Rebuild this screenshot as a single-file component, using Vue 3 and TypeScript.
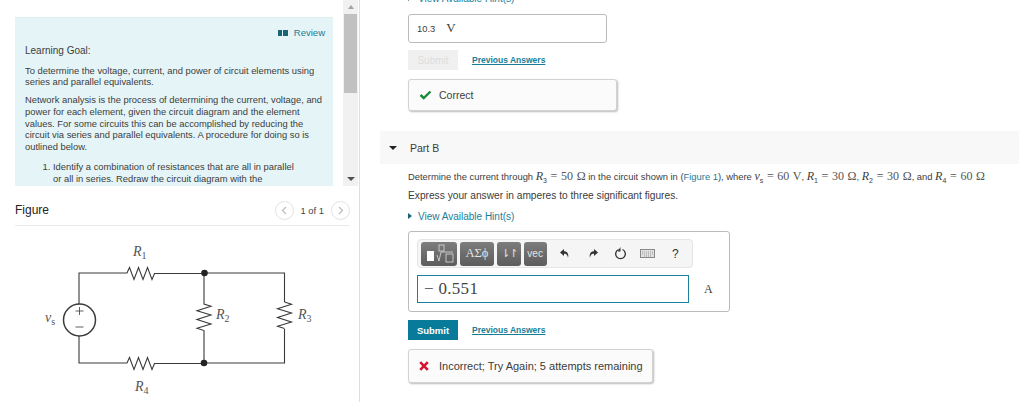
<script setup lang="ts">
const steps = ['Identify a combination of resistances that are all in parallel or all in series. Redraw the circuit diagram with the']
const tools = [
  { label: 'AΣϕ', cls: 'greek' },
  { label: '⇂↾', cls: 'arrows' },
  { label: 'vec', cls: 'vec' },
]
</script>

<template>
  <div class="page">
    <aside class="left">
      <div class="top-pane">
        <section class="goal">
          <div class="review"><span class="book"><i></i><i></i></span>Review</div>
          <p class="goal-title">Learning Goal:</p>
          <p class="intro">To determine the voltage, current, and power of circuit elements using series and parallel equivalents.</p>
          <p class="network">Network analysis is the process of determining the current, voltage, and power for each element, given the circuit diagram and the element values. For some circuits this can be accomplished by reducing the circuit via series and parallel equivalents. A procedure for doing so is outlined below.</p>
          <ol><li v-for="s in steps" :key="s">{{ s }}</li></ol>
        </section>
        <div class="scrollbar">
          <span class="arrow up"></span>
          <span class="thumb"></span>
          <span class="spacer"></span>
          <span class="arrow down"></span>
        </div>
      </div>
      <section class="figure">
        <header class="figure-head">
          <h2>Figure</h2>
          <div class="pager">
            <span class="round">
              <svg width="6" height="9" viewBox="0 0 6 9"><path d="M5 1L1.500 4.500 5 8" fill="none" stroke="#bbb" stroke-width="1.200"/></svg>
            </span>
            <span>1 of 1</span>
            <span class="round">
              <svg width="6" height="9" viewBox="0 0 6 9"><path d="M1 1l3.500 3.500L1 8" fill="none" stroke="#bbb" stroke-width="1.200"/></svg>
            </span>
          </div>
        </header>
        <svg class="circuit" width="345" height="160" viewBox="0 0 345 160">
          <g fill="none" stroke="#3a3a3a" stroke-width="1.100">
            <path d="M64 78V47H112l2.500-5.500 4.500 12 4.500-12 4.500 12 4.500-12 4.500 12 2.500-6H189"/>
            <path d="M189 47H269.500V76"/>
            <path d="M64 110V137H112l2.500-5.500 4.500 12 4.500-12 4.500 12 4.500-12 4.500 12 2.500-6H189"/>
            <path d="M189 137H269.500V103"/>
            <path d="M189 47V78l7 2.300-14 4.400 14 4.400-14 4.400 14 4.400-14 4.400 7 2.300V137"/>
            <path d="M269.500 76l7 2.300-14 4.400 14 4.400-14 4.400 14 4.400-14 4.400 7 2.300"/>
            <circle cx="64.500" cy="94" r="16" stroke-width="1.500"/>
            <path d="M60.500 85h8M64.500 81v8M60.500 101h8" stroke-width=".8"/>
          </g>
          <circle cx="189.500" cy="47" r="3.300" fill="#222"/>
          <circle cx="189" cy="137" r="3.300" fill="#222"/>
          <g class="m">
            <text x="118" y="30">R<tspan class="s" dy="3">1</tspan></text>
            <text x="201" y="93">R<tspan class="s" dy="3">2</tspan></text>
            <text x="283" y="93">R<tspan class="s" dy="3">3</tspan></text>
            <text x="120" y="165">R<tspan class="s" dy="3">4</tspan></text>
            <text x="30" y="96">v<tspan class="s" dy="3">s</tspan></text>
          </g>
        </svg>
      </section>
    </aside>

    <main class="right">
      <div class="hint cut"><span class="tri"></span>View Available Hint(s)</div>
      <div class="answer-box"><span>10.3</span><b>V</b></div>
      <div class="actions">
        <button class="submit off">Submit</button>
        <a>Previous Answers</a>
      </div>
      <div class="feedback correct">
        <svg width="13" height="10" viewBox="0 0 13 10"><path d="M1.500 5l3.200 3L11.500 1.500" fill="none" stroke="#1a8a3c" stroke-width="2.400"/></svg>
        Correct
      </div>

      <div class="part"><span class="down"></span>Part B</div>

      <p class="question">Determine the current through <i class="mi">R</i><sub>3</sub><span class="mn"> = 50 Ω</span> in the circuit shown in (<a class="fig">Figure 1</a>), where <i class="mi">v</i><sub>s</sub><span class="mn"> = 60 V</span>, <i class="mi">R</i><sub>1</sub><span class="mn"> = 30 Ω</span>, <i class="mi">R</i><sub>2</sub><span class="mn"> = 30 Ω</span>, and <i class="mi">R</i><sub>4</sub><span class="mn"> = 60 Ω</span></p>
      <p class="express">Express your answer in amperes to three significant figures.</p>
      <div class="hint"><span class="tri"></span>View Available Hint(s)</div>

      <div class="editor">
        <div class="toolbar">
          <span class="tool templ">
            <svg width="33" height="22" viewBox="0 0 33 22">
              <rect x="5" y="8" width="7" height="10" fill="#fff"/>
              <rect x="17" y="2" width="5" height="6" fill="none" stroke="#ddd" stroke-width=".8"/>
              <path d="M15 12l2 6 2-9h12" fill="none" stroke="#ddd" stroke-width=".8"/>
              <rect x="24" y="11" width="7" height="8" fill="none" stroke="#ddd" stroke-width=".8"/>
            </svg>
          </span>
          <span v-for="t in tools" :key="t.label" class="tool" :class="t.cls">{{ t.label }}</span>
          <div class="icons">
            <svg width="12" height="12" viewBox="0 0 12 12"><path d="M5 1L1 4.500 5 8V5.800c2.500 0 3.500 1 4 4 1-3.500-.5-6.500-4-6.500z" fill="#333"/></svg>
            <svg width="12" height="12" viewBox="0 0 12 12"><path d="M7 1l4 3.500L7 8V5.800c-2.500 0-3.500 1-4 4-1-3.500.5-6.500 4-6.500z" fill="#333"/></svg>
            <svg width="13" height="13" viewBox="0 0 13 13"><path d="M4.500 2.500a4.800 4.800 0 1 0 4 0" fill="none" stroke="#333" stroke-width="1.300"/><path d="M8.500 0v4.500h-3z" fill="#333" transform="translate(-2 0)"/></svg>
            <svg width="15" height="10" viewBox="0 0 15 10"><rect x=".5" y=".5" width="14" height="8" fill="#e2e2e2" stroke="#888"/><path d="M2 3h11M2 5h11M4 7h7" stroke="#999" stroke-dasharray="1 1"/></svg>
            <span class="q">?</span>
          </div>
        </div>
        <div class="input-row">
          <div class="math-input">− 0.551</div>
          <span class="unit">A</span>
        </div>
      </div>
      <div class="actions second">
        <button class="submit">Submit</button>
        <a>Previous Answers</a>
      </div>
      <div class="feedback wrong">
        <svg width="10" height="10" viewBox="0 0 10 10"><path d="M1.200 1.200l7.600 7.600M8.800 1.200L1.200 8.800" stroke="#d8132f" stroke-width="2.600"/></svg>
        Incorrect; Try Again; 5 attempts remaining
      </div>
    </main>
  </div>
</template>

<style>
html, body { margin: 0; background: #fff; }
</style>

<style scoped>
.page {
  display: flex;
  width: 1024px;
  height: 402px;
  overflow: hidden;
  font-family: "Liberation Sans", Arial, sans-serif;
  color: #3c3c3c;
  background: #fff;
}
p { margin: 0; }
.left {
  flex: none;
  width: 359px;
  height: 402px;
  border-right: 1px solid #d5e0ee;
}
.top-pane {
  display: flex;
  height: 186px;
  padding-left: 15px;
  overflow: hidden;
}
.goal {
  width: 318px;
  height: 169px;
  margin-top: 17px;
  padding: 9px 8px 0 10px;
  box-sizing: border-box;
  overflow: hidden;
  background: #e5f5f7;
  border-top: 1px solid #dfeeef;
  font-size: 9.400px;
  line-height: 11.700px;
}
.review {
  display: flex;
  justify-content: flex-end;
  align-items: center;
  gap: 6px;
  height: 11px;
  color: #1a7d96;
  font-size: 9.500px;
}
.book { display: flex; gap: 1px; }
.book i { width: 4.500px; height: 6px; background: #1b6379; }
.goal-title { margin-top: 7px; font-size: 10px; }
.intro { margin-top: 8px; }
.network { margin-top: 6px; }
ol { margin: 8.600px 0 0; padding-left: 28px; width: 247px; }
.scrollbar {
  flex: none;
  display: flex;
  flex-direction: column;
  align-items: center;
  width: 15px;
  margin-left: 10px;
  background: #f1f1f1;
}
.thumb { width: 13px; height: 79px; background: #c1c1c1; flex: none; }
.spacer { flex: 1; }
.arrow { flex: none; width: 0; height: 0; margin: 5px 0; border: 3.500px solid transparent; }
.arrow.up { border-top: 0; border-bottom: 4px solid #a3a3a3; }
.arrow.down { border-bottom: 0; border-top: 4px solid #505050; }
.figure { padding: 0 9px 0 15px; }
.figure-head {
  display: flex;
  justify-content: space-between;
  align-items: flex-end;
  height: 40px;
  padding-bottom: 5px;
  box-sizing: border-box;
  border-bottom: 1px solid #ebebeb;
}
h2 { margin: 0 0 3px; font-size: 12px; line-height: 14px; font-weight: 400; color: #222; }
.pager { display: flex; align-items: center; gap: 7px; font-size: 9.400px; color: #444; }
.round {
  display: flex;
  align-items: center;
  justify-content: center;
  width: 19px;
  height: 19px;
  box-sizing: border-box;
  border: 1px solid #e3e3e3;
  border-radius: 50%;
}
.circuit { display: block; overflow: visible; }
.m text { font: italic 14px "Liberation Serif", serif; fill: #555; }
.m .s { font-size: 10px; font-style: normal; }

.right { flex: none; width: 644px; padding-left: 20px; }
.hint {
  display: flex;
  align-items: center;
  height: 12px;
  margin-left: 28px;
  font-size: 10px;
  color: #1a7d96;
  gap: 6px;
}
.hint.cut { margin-top: -8px; }
.tri { width: 0; height: 0; border-left: 4px solid #1b6379; border-top: 3.500px solid transparent; border-bottom: 3.500px solid transparent; }
.answer-box {
  display: flex;
  align-items: center;
  gap: 11px;
  box-sizing: border-box;
  width: 199px;
  height: 29px;
  margin: 10px 0 0 28px;
  padding-left: 8px;
  border: 1px solid #bbb;
  border-radius: 3px;
  font-size: 9.400px;
}
.answer-box b { font: 400 13px "Liberation Serif", serif; padding-bottom: 2px; }
.actions { display: flex; align-items: center; gap: 14px; margin: 7px 0 0 28px; }
.actions a { color: #1a7d96; font-size: 8.500px; text-decoration: underline; font-weight: 700; padding-bottom: 1px; }
.submit {
  width: 50px;
  height: 20px;
  padding: 0;
  border: 0;
  background: #087b9b;
  color: #fff;
  font: 700 9.500px "Liberation Sans", Arial, sans-serif;
}
.submit.off { background: #f0f0f0; color: #ddd; font-weight: 400; font-size: 10px; }
.feedback {
  display: flex;
  align-items: center;
  box-sizing: border-box;
  height: 32px;
  width: 209px;
  margin: 9px 0 0 28px;
  padding-left: 10px;
  gap: 7px;
  background: #fbfbfb;
  border: 1px solid #d2d2d2;
  border-radius: 3px;
  box-shadow: 1px 1px 2px #bbb;
  font-size: 10.500px;
}
.part {
  display: flex;
  align-items: center;
  height: 33px;
  width: 639px;
  margin-top: 20px;
  padding-left: 9px;
  box-sizing: border-box;
  background: #f8f8f8;
  font-size: 10.500px;
  gap: 13px;
}
.down { width: 0; height: 0; border-top: 4px solid #222; border-left: 4px solid transparent; border-right: 4px solid transparent; }
.question { margin: 6px 0 0 28px; font-size: 9.400px; line-height: 13px; white-space: nowrap; }
.mi, .mn { font-family: "Liberation Serif", serif; font-size: 12px; }
.mn { color: #555; word-spacing: .650px; }
sub { font-size: 7px; line-height: 0; }
.fig { color: #1a7d96; }
.express { margin: 7px 0 8px 28px; font-size: 10.200px; line-height: 12px; }
.editor {
  box-sizing: border-box;
  width: 322px;
  height: 81px;
  margin: 9px 0 0 28px;
  padding: 7px 8px 0;
  border: 1px solid #bbb;
  border-radius: 3px;
}
.toolbar {
  display: flex;
  align-items: center;
  gap: 3px;
  box-sizing: border-box;
  width: 276px;
  height: 29px;
  padding: 0 3px;
  background: #f5f5f5;
  border: 1px solid #e5e5e5;
  border-radius: 4px;
}
.tool {
  display: flex;
  align-items: center;
  justify-content: center;
  height: 24px;
  border-radius: 3px;
  background: linear-gradient(#7d7d7d, #5c5c5c);
  color: #e4e4e4;
  font-size: 11px;
}
.templ { width: 36px; }
.greek { width: 35px; font-family: "Liberation Serif", serif; font-size: 12.500px; }
.arrows { width: 24px; letter-spacing: -1.500px; }
.vec { width: 23px; font-size: 10px; }
.icons { display: grid; grid-template-columns: repeat(5, 27.500px); justify-items: center; align-items: center; margin-left: 2px; }
.q { font-size: 12px; color: #333; }
.input-row { display: flex; align-items: center; margin-top: 7px; }
.math-input {
  box-sizing: border-box;
  width: 272px;
  height: 28px;
  padding-left: 6px;
  border: 1px solid #1c7f9c;
  font: 17px/25px "Liberation Serif", serif;
  letter-spacing: .300px;
  color: #444;
}
.unit { margin-left: 15px; font: 12px "Liberation Serif", serif; }
.second { margin-top: 8px; }
.wrong { width: 245px; height: 34px; margin-top: 9px; gap: 10px; font-size: 11px; }
</style>
